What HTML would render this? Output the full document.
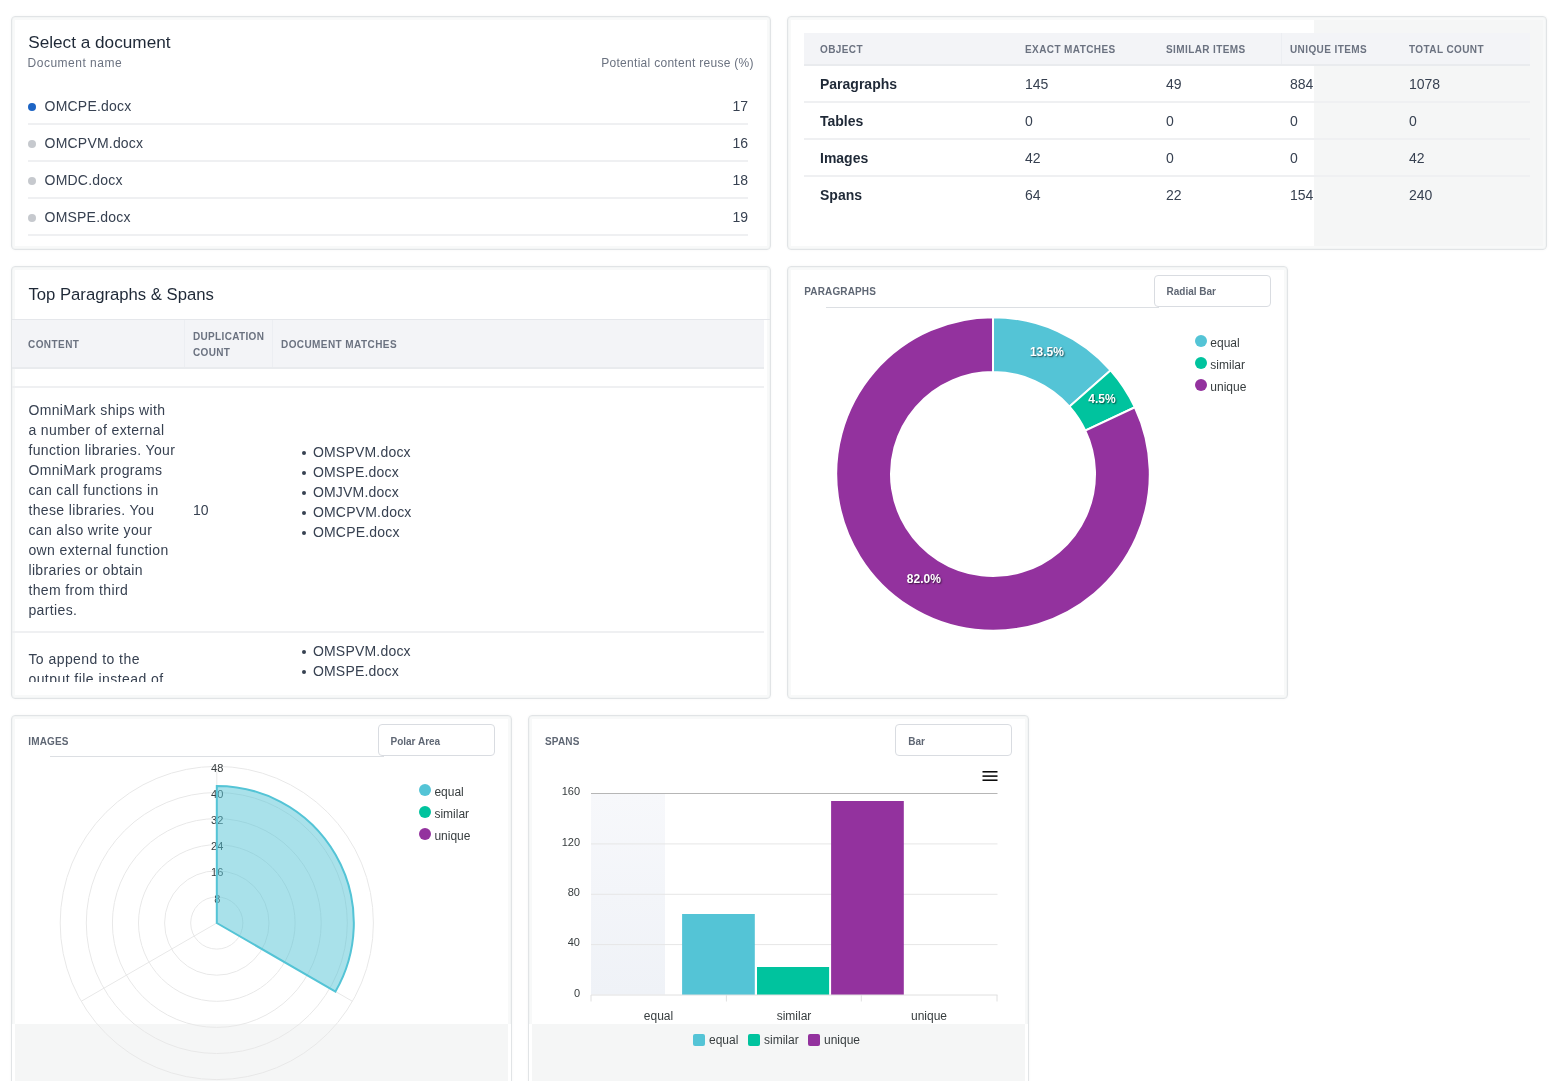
<!DOCTYPE html>
<html><head><meta charset="utf-8"><style>
html,body{margin:0;padding:0;background:#fff;width:1550px;height:1081px;overflow:hidden;position:relative}
body{font-family:"Liberation Sans",sans-serif}
.t{position:absolute;white-space:nowrap;line-height:1}
.card{position:absolute;box-sizing:border-box;border:1px solid #e1e4e6;border-radius:4px;box-shadow:inset 0 0 0 1px #f3f5f5, inset 0 0 0 3px #f8f9f9, 0 0 3px rgba(0,0,0,0.035)}
.ov{position:absolute;left:0;top:0}
#root{position:absolute;left:0;top:0;width:1550px;height:1081px;overflow:hidden;will-change:transform}
</style></head><body><div id="root">
<div class="card" style="left:11px;top:16px;width:760px;height:234px"></div>
<div class="card" style="left:787px;top:16px;width:760px;height:234px"></div>
<div class="card" style="left:11px;top:266px;width:760px;height:433px"></div>
<div class="card" style="left:787px;top:266px;width:501px;height:433px"></div>
<div class="card" style="left:11px;top:715px;width:501px;height:486px"></div>
<div class="card" style="left:528px;top:715px;width:501px;height:486px"></div>
<div style="position:absolute;left:1314px;top:20px;width:229px;height:226px;background:#f5f6f6"></div>
<div style="position:absolute;left:12px;top:1024px;width:499px;height:60px;background:#fff"></div>
<div style="position:absolute;left:529px;top:1024px;width:499px;height:60px;background:#fff"></div>
<div style="position:absolute;left:15px;top:1023.7px;width:493px;height:60px;background:#f5f6f6"></div>
<div style="position:absolute;left:532px;top:1023.7px;width:493px;height:60px;background:#f5f6f6"></div>
<div class="t" style="top:33.84px;font-size:17.2px;color:#1f2937;left:28.20px;">Select a document</div>
<div class="t" style="top:56.64px;font-size:12px;color:#6b7280;letter-spacing:0.5px;left:27.60px;">Document name</div>
<div class="t" style="top:56.64px;font-size:12px;color:#6b7280;letter-spacing:0.29px;right:796.21px;">Potential content reuse (%)</div>
<div style="position:absolute;left:28px;top:102.5px;width:8px;height:8px;border-radius:50%;background:#1d64c4"></div>
<div class="t" style="top:99.25px;font-size:14px;color:#374151;letter-spacing:0.2px;left:44.60px;">OMCPE.docx</div>
<div class="t" style="top:99.25px;font-size:14px;color:#374151;right:802.00px;">17</div>
<div style="position:absolute;left:28px;top:123px;width:720px;height:2px;background:#eff0f2"></div>
<div style="position:absolute;left:28px;top:139.5px;width:8px;height:8px;border-radius:50%;background:#c6c9ce"></div>
<div class="t" style="top:136.25px;font-size:14px;color:#374151;letter-spacing:0.2px;left:44.60px;">OMCPVM.docx</div>
<div class="t" style="top:136.25px;font-size:14px;color:#374151;right:802.00px;">16</div>
<div style="position:absolute;left:28px;top:160px;width:720px;height:2px;background:#eff0f2"></div>
<div style="position:absolute;left:28px;top:176.5px;width:8px;height:8px;border-radius:50%;background:#c6c9ce"></div>
<div class="t" style="top:173.25px;font-size:14px;color:#374151;letter-spacing:0.2px;left:44.60px;">OMDC.docx</div>
<div class="t" style="top:173.25px;font-size:14px;color:#374151;right:802.00px;">18</div>
<div style="position:absolute;left:28px;top:197px;width:720px;height:2px;background:#eff0f2"></div>
<div style="position:absolute;left:28px;top:213.5px;width:8px;height:8px;border-radius:50%;background:#c6c9ce"></div>
<div class="t" style="top:210.25px;font-size:14px;color:#374151;letter-spacing:0.2px;left:44.60px;">OMSPE.docx</div>
<div class="t" style="top:210.25px;font-size:14px;color:#374151;right:802.00px;">19</div>
<div style="position:absolute;left:28px;top:234px;width:720px;height:2px;background:#eff0f2"></div>
<div style="position:absolute;left:804px;top:33px;width:726px;height:31px;background:#f3f4f7"></div>
<div style="position:absolute;left:804px;top:64px;width:726px;height:2px;background:#e9ebee"></div>
<div style="position:absolute;left:1281px;top:33px;width:1px;height:31px;background:#eceef2"></div>
<div class="t" style="top:44.53px;font-size:10px;font-weight:700;color:#6b7280;letter-spacing:0.4px;left:820.00px;">OBJECT</div>
<div class="t" style="top:44.53px;font-size:10px;font-weight:700;color:#6b7280;letter-spacing:0.4px;left:1025.00px;">EXACT MATCHES</div>
<div class="t" style="top:44.53px;font-size:10px;font-weight:700;color:#6b7280;letter-spacing:0.4px;left:1166.00px;">SIMILAR ITEMS</div>
<div class="t" style="top:44.53px;font-size:10px;font-weight:700;color:#6b7280;letter-spacing:0.4px;left:1290.00px;">UNIQUE ITEMS</div>
<div class="t" style="top:44.53px;font-size:10px;font-weight:700;color:#6b7280;letter-spacing:0.4px;left:1409.00px;">TOTAL COUNT</div>
<div class="t" style="top:76.75px;font-size:14px;font-weight:700;color:#1f2937;left:820.00px;">Paragraphs</div>
<div class="t" style="top:76.75px;font-size:14px;color:#374151;left:1025.00px;">145</div>
<div class="t" style="top:76.75px;font-size:14px;color:#374151;left:1166.00px;">49</div>
<div class="t" style="top:76.75px;font-size:14px;color:#374151;left:1290.00px;">884</div>
<div class="t" style="top:76.75px;font-size:14px;color:#374151;left:1409.00px;">1078</div>
<div style="position:absolute;left:804px;top:101px;width:726px;height:2px;background:#eff0f2"></div>
<div class="t" style="top:113.75px;font-size:14px;font-weight:700;color:#1f2937;left:820.00px;">Tables</div>
<div class="t" style="top:113.75px;font-size:14px;color:#374151;left:1025.00px;">0</div>
<div class="t" style="top:113.75px;font-size:14px;color:#374151;left:1166.00px;">0</div>
<div class="t" style="top:113.75px;font-size:14px;color:#374151;left:1290.00px;">0</div>
<div class="t" style="top:113.75px;font-size:14px;color:#374151;left:1409.00px;">0</div>
<div style="position:absolute;left:804px;top:138px;width:726px;height:2px;background:#eff0f2"></div>
<div class="t" style="top:150.75px;font-size:14px;font-weight:700;color:#1f2937;left:820.00px;">Images</div>
<div class="t" style="top:150.75px;font-size:14px;color:#374151;left:1025.00px;">42</div>
<div class="t" style="top:150.75px;font-size:14px;color:#374151;left:1166.00px;">0</div>
<div class="t" style="top:150.75px;font-size:14px;color:#374151;left:1290.00px;">0</div>
<div class="t" style="top:150.75px;font-size:14px;color:#374151;left:1409.00px;">42</div>
<div style="position:absolute;left:804px;top:175px;width:726px;height:2px;background:#eff0f2"></div>
<div class="t" style="top:187.75px;font-size:14px;font-weight:700;color:#1f2937;left:820.00px;">Spans</div>
<div class="t" style="top:187.75px;font-size:14px;color:#374151;left:1025.00px;">64</div>
<div class="t" style="top:187.75px;font-size:14px;color:#374151;left:1166.00px;">22</div>
<div class="t" style="top:187.75px;font-size:14px;color:#374151;left:1290.00px;">154</div>
<div class="t" style="top:187.75px;font-size:14px;color:#374151;left:1409.00px;">240</div>
<div class="t" style="top:287.26px;font-size:16.7px;color:#1f2937;left:28.40px;">Top Paragraphs &amp; Spans</div>
<div style="position:absolute;left:12px;top:319px;width:758px;height:1px;background:#e5e7eb"></div>
<div style="position:absolute;left:12px;top:320px;width:752px;height:47px;background:#f3f4f7"></div>
<div style="position:absolute;left:12px;top:367px;width:752px;height:2px;background:#e9ebee"></div>
<div style="position:absolute;left:184px;top:320px;width:1px;height:47px;background:#eceef2"></div>
<div style="position:absolute;left:272px;top:320px;width:1px;height:47px;background:#eceef2"></div>
<div class="t" style="top:339.54px;font-size:10px;font-weight:700;color:#6b7280;letter-spacing:0.43px;left:28.00px;">CONTENT</div>
<div class="t" style="top:331.74px;font-size:10px;font-weight:700;color:#6b7280;letter-spacing:0.33px;left:193.00px;">DUPLICATION</div>
<div class="t" style="top:347.74px;font-size:10px;font-weight:700;color:#6b7280;letter-spacing:0.33px;left:193.00px;">COUNT</div>
<div class="t" style="top:339.54px;font-size:10px;font-weight:700;color:#6b7280;letter-spacing:0.42px;left:281.00px;">DOCUMENT MATCHES</div>
<div style="position:absolute;left:12px;top:386px;width:752px;height:2px;background:#eff0f2"></div>
<div class="t" style="top:403.35px;font-size:14px;color:#374151;letter-spacing:0.38px;left:28.40px;">OmniMark ships with</div>
<div class="t" style="top:423.35px;font-size:14px;color:#374151;letter-spacing:0.38px;left:28.40px;">a number of external</div>
<div class="t" style="top:443.35px;font-size:14px;color:#374151;letter-spacing:0.38px;left:28.40px;">function libraries. Your</div>
<div class="t" style="top:463.35px;font-size:14px;color:#374151;letter-spacing:0.38px;left:28.40px;">OmniMark programs</div>
<div class="t" style="top:483.35px;font-size:14px;color:#374151;letter-spacing:0.38px;left:28.40px;">can call functions in</div>
<div class="t" style="top:503.35px;font-size:14px;color:#374151;letter-spacing:0.38px;left:28.40px;">these libraries. You</div>
<div class="t" style="top:523.35px;font-size:14px;color:#374151;letter-spacing:0.38px;left:28.40px;">can also write your</div>
<div class="t" style="top:543.35px;font-size:14px;color:#374151;letter-spacing:0.38px;left:28.40px;">own external function</div>
<div class="t" style="top:563.35px;font-size:14px;color:#374151;letter-spacing:0.38px;left:28.40px;">libraries or obtain</div>
<div class="t" style="top:583.35px;font-size:14px;color:#374151;letter-spacing:0.38px;left:28.40px;">them from third</div>
<div class="t" style="top:603.35px;font-size:14px;color:#374151;letter-spacing:0.38px;left:28.40px;">parties.</div>
<div class="t" style="top:503.15px;font-size:14px;color:#374151;left:193.00px;">10</div>
<div style="position:absolute;left:302.2px;top:450.5px;width:4px;height:4px;border-radius:50%;background:#374151"></div>
<div class="t" style="top:444.95px;font-size:14px;color:#374151;letter-spacing:0.2px;left:312.90px;">OMSPVM.docx</div>
<div style="position:absolute;left:302.2px;top:470.5px;width:4px;height:4px;border-radius:50%;background:#374151"></div>
<div class="t" style="top:464.95px;font-size:14px;color:#374151;letter-spacing:0.2px;left:312.90px;">OMSPE.docx</div>
<div style="position:absolute;left:302.2px;top:490.5px;width:4px;height:4px;border-radius:50%;background:#374151"></div>
<div class="t" style="top:484.95px;font-size:14px;color:#374151;letter-spacing:0.2px;left:312.90px;">OMJVM.docx</div>
<div style="position:absolute;left:302.2px;top:510.5px;width:4px;height:4px;border-radius:50%;background:#374151"></div>
<div class="t" style="top:504.95px;font-size:14px;color:#374151;letter-spacing:0.2px;left:312.90px;">OMCPVM.docx</div>
<div style="position:absolute;left:302.2px;top:530.5px;width:4px;height:4px;border-radius:50%;background:#374151"></div>
<div class="t" style="top:524.95px;font-size:14px;color:#374151;letter-spacing:0.2px;left:312.90px;">OMCPE.docx</div>
<div style="position:absolute;left:12px;top:631px;width:752px;height:2px;background:#eff0f2"></div>
<div style="position:absolute;left:12px;top:633px;width:752px;height:49px;overflow:hidden">
<div class="t" style="left:16.4px;top:19.05px;font-size:14px;color:#374151;letter-spacing:0.45px">To append to the</div>
<div class="t" style="left:16.4px;top:39.05px;font-size:14px;color:#374151;letter-spacing:0.45px">output file instead of</div>
<div style="position:absolute;left:290.2px;top:16.7px;width:4px;height:4px;border-radius:50%;background:#374151"></div>
<div class="t" style="left:300.9px;top:11.15px;font-size:14px;color:#374151;letter-spacing:0.2px">OMSPVM.docx</div>
<div style="position:absolute;left:290.2px;top:36.7px;width:4px;height:4px;border-radius:50%;background:#374151"></div>
<div class="t" style="left:300.9px;top:31.15px;font-size:14px;color:#374151;letter-spacing:0.2px">OMSPE.docx</div>
</div>
<div class="t" style="top:287.24px;font-size:10px;font-weight:700;color:#5f6774;letter-spacing:0.15px;left:804.20px;">PARAGRAPHS</div>
<div style="position:absolute;left:1153.5px;top:275px;width:117.5px;height:31.5px;border:1px solid #d9dce1;border-radius:4px;box-sizing:border-box;background:#fff"></div>
<div class="t" style="top:287.24px;font-size:10px;font-weight:700;color:#5f6774;left:1166.50px;">Radial Bar</div>
<div style="position:absolute;left:826px;top:307px;width:333px;height:1px;background:#dcdfe3"></div>
<svg class="ov" width="1550" height="1081">
<path d="M993.00,317.20 A156.8,156.8 0 0 1 1110.62,370.31 L1069.51,406.55 A102,102 0 0 0 993.00,372.00 Z" fill="#54c4d6" stroke="#fff" stroke-width="2"/>
<path d="M1110.62,370.31 A156.8,156.8 0 0 1 1134.88,407.24 L1085.29,430.57 A102,102 0 0 0 1069.51,406.55 Z" fill="#00c39e" stroke="#fff" stroke-width="2"/>
<path d="M1134.88,407.24 A156.8,156.8 0 1 1 993.00,317.20 L993.00,372.00 A102,102 0 1 0 1085.29,430.57 Z" fill="#93329e" stroke="#fff" stroke-width="2"/>
</svg>
<div class="t" style="top:345.94px;font-size:12px;font-weight:700;color:#fff;left:746.90px;width:600px;text-align:center;text-shadow:1px 1px 1.5px rgba(0,0,0,0.6);">13.5%</div>
<div class="t" style="top:393.24px;font-size:12px;font-weight:700;color:#fff;left:802.00px;width:600px;text-align:center;text-shadow:1px 1px 1.5px rgba(0,0,0,0.6);">4.5%</div>
<div class="t" style="top:573.14px;font-size:12px;font-weight:700;color:#fff;left:623.80px;width:600px;text-align:center;text-shadow:1px 1px 1.5px rgba(0,0,0,0.6);">82.0%</div>
<div style="position:absolute;left:1195px;top:335px;width:12px;height:12px;border-radius:50%;background:#54c4d6"></div>
<div class="t" style="top:337.14px;font-size:12px;color:#373d3f;left:1210.30px;">equal</div>
<div style="position:absolute;left:1195px;top:357px;width:12px;height:12px;border-radius:50%;background:#00c39e"></div>
<div class="t" style="top:359.14px;font-size:12px;color:#373d3f;left:1210.30px;">similar</div>
<div style="position:absolute;left:1195px;top:379px;width:12px;height:12px;border-radius:50%;background:#93329e"></div>
<div class="t" style="top:381.14px;font-size:12px;color:#373d3f;left:1210.30px;">unique</div>
<div class="t" style="top:736.53px;font-size:10px;font-weight:700;color:#5f6774;letter-spacing:0.15px;left:28.30px;">IMAGES</div>
<div style="position:absolute;left:377.5px;top:724.4px;width:117.5px;height:31.399999999999977px;border:1px solid #d9dce1;border-radius:4px;box-sizing:border-box;background:#fff"></div>
<div class="t" style="top:736.53px;font-size:10px;font-weight:700;color:#5f6774;left:390.50px;">Polar Area</div>
<div style="position:absolute;left:50px;top:756px;width:333.5px;height:1px;background:#dcdfe3"></div>
<svg class="ov" width="1550" height="1081">
<circle cx="216.8" cy="923" r="26.10" fill="none" stroke="#e8e8e8" stroke-width="1"/>
<circle cx="216.8" cy="923" r="52.20" fill="none" stroke="#e8e8e8" stroke-width="1"/>
<circle cx="216.8" cy="923" r="78.30" fill="none" stroke="#e8e8e8" stroke-width="1"/>
<circle cx="216.8" cy="923" r="104.40" fill="none" stroke="#e8e8e8" stroke-width="1"/>
<circle cx="216.8" cy="923" r="130.50" fill="none" stroke="#e8e8e8" stroke-width="1"/>
<circle cx="216.8" cy="923" r="156.60" fill="none" stroke="#e8e8e8" stroke-width="1"/>
<line x1="216.8" y1="923" x2="216.80" y2="766.40" stroke="#e8e8e8" stroke-width="1"/>
<line x1="216.8" y1="923" x2="352.42" y2="1001.30" stroke="#e8e8e8" stroke-width="1"/>
<line x1="216.8" y1="923" x2="81.18" y2="1001.30" stroke="#e8e8e8" stroke-width="1"/>
<text x="217.20" y="902.50" text-anchor="middle" font-family="Liberation Sans" font-size="11" fill="#373d3f">8</text>
<text x="217.20" y="876.40" text-anchor="middle" font-family="Liberation Sans" font-size="11" fill="#373d3f">16</text>
<text x="217.20" y="850.30" text-anchor="middle" font-family="Liberation Sans" font-size="11" fill="#373d3f">24</text>
<text x="217.20" y="824.20" text-anchor="middle" font-family="Liberation Sans" font-size="11" fill="#373d3f">32</text>
<text x="217.20" y="798.10" text-anchor="middle" font-family="Liberation Sans" font-size="11" fill="#373d3f">40</text>
<text x="217.20" y="772.00" text-anchor="middle" font-family="Liberation Sans" font-size="11" fill="#373d3f">48</text>
<path d="M216.8,923 L216.8,785.98 A137.03,137.03 0 0 1 335.47,991.51 Z" fill="rgba(84,196,214,0.5)" stroke="#54c4d6" stroke-width="2"/>
</svg>
<div style="position:absolute;left:419px;top:783.8px;width:12px;height:12px;border-radius:50%;background:#54c4d6"></div>
<div class="t" style="top:785.54px;font-size:12px;color:#373d3f;left:434.40px;">equal</div>
<div style="position:absolute;left:419px;top:805.8px;width:12px;height:12px;border-radius:50%;background:#00c39e"></div>
<div class="t" style="top:807.54px;font-size:12px;color:#373d3f;left:434.40px;">similar</div>
<div style="position:absolute;left:419px;top:827.8px;width:12px;height:12px;border-radius:50%;background:#93329e"></div>
<div class="t" style="top:829.54px;font-size:12px;color:#373d3f;left:434.40px;">unique</div>
<div class="t" style="top:736.53px;font-size:10px;font-weight:700;color:#5f6774;letter-spacing:0.15px;left:545.00px;">SPANS</div>
<div style="position:absolute;left:895.3px;top:724.4px;width:117.20000000000005px;height:31.399999999999977px;border:1px solid #d9dce1;border-radius:4px;box-sizing:border-box;background:#fff"></div>
<div class="t" style="top:736.53px;font-size:10px;font-weight:700;color:#5f6774;left:908.30px;">Bar</div>
<svg class="ov" width="1550" height="1081">
<defs><linearGradient id="hov" x1="0" y1="0" x2="0" y2="1"><stop offset="0" stop-color="#f7f8fb"/><stop offset="1" stop-color="#eff2f7"/></linearGradient></defs>
<rect x="591" y="793.5" width="74" height="201" fill="url(#hov)"/>
<line x1="591" x2="997.5" y1="843.9" y2="843.9" stroke="#e6e6e6" stroke-width="1"/>
<line x1="591" x2="997.5" y1="894.3" y2="894.3" stroke="#e6e6e6" stroke-width="1"/>
<line x1="591" x2="997.5" y1="944.6" y2="944.6" stroke="#e6e6e6" stroke-width="1"/>
<line x1="591" x2="997.5" y1="793.5" y2="793.5" stroke="#b6b6b6" stroke-width="1"/>
<rect x="682.1" y="914" width="72.7" height="81" fill="#54c4d6"/>
<rect x="757" y="967" width="72.1" height="28" fill="#00c39e"/>
<rect x="831.1" y="801" width="72.7" height="194" fill="#93329e"/>
<line x1="591" x2="997.5" y1="995" y2="995" stroke="#e0e0e0" stroke-width="1"/>
<line x1="591" x2="591" y1="995" y2="1001.5" stroke="#e0e0e0" stroke-width="1"/>
<line x1="726.4" x2="726.4" y1="995" y2="1001.5" stroke="#e0e0e0" stroke-width="1"/>
<line x1="861.3" x2="861.3" y1="995" y2="1001.5" stroke="#e0e0e0" stroke-width="1"/>
<line x1="997" x2="997" y1="995" y2="1001.5" stroke="#e0e0e0" stroke-width="1"/>
<line x1="982.5" x2="997.5" y1="771.8" y2="771.8" stroke="#000" stroke-width="1.5"/>
<line x1="982.5" x2="997.5" y1="776.1" y2="776.1" stroke="#000" stroke-width="1.5"/>
<line x1="982.5" x2="997.5" y1="780.2" y2="780.2" stroke="#000" stroke-width="1.5"/>
</svg>
<div class="t" style="top:786.39px;font-size:11px;color:#373d3f;right:970.00px;">160</div>
<div class="t" style="top:836.79px;font-size:11px;color:#373d3f;right:970.00px;">120</div>
<div class="t" style="top:887.19px;font-size:11px;color:#373d3f;right:970.00px;">80</div>
<div class="t" style="top:937.49px;font-size:11px;color:#373d3f;right:970.00px;">40</div>
<div class="t" style="top:987.89px;font-size:11px;color:#373d3f;right:970.00px;">0</div>
<div class="t" style="top:1010.34px;font-size:12px;color:#373d3f;left:358.50px;width:600px;text-align:center;">equal</div>
<div class="t" style="top:1010.34px;font-size:12px;color:#373d3f;left:494.00px;width:600px;text-align:center;">similar</div>
<div class="t" style="top:1010.34px;font-size:12px;color:#373d3f;left:629.00px;width:600px;text-align:center;">unique</div>
<div style="position:absolute;left:693px;top:1034.3px;width:12px;height:12px;border-radius:2px;background:#54c4d6"></div>
<div class="t" style="top:1034.24px;font-size:12px;color:#373d3f;left:709.00px;">equal</div>
<div style="position:absolute;left:748px;top:1034.3px;width:12px;height:12px;border-radius:2px;background:#00c39e"></div>
<div class="t" style="top:1034.24px;font-size:12px;color:#373d3f;left:764.00px;">similar</div>
<div style="position:absolute;left:808px;top:1034.3px;width:12px;height:12px;border-radius:2px;background:#93329e"></div>
<div class="t" style="top:1034.24px;font-size:12px;color:#373d3f;left:824.00px;">unique</div>
</div></body></html>
